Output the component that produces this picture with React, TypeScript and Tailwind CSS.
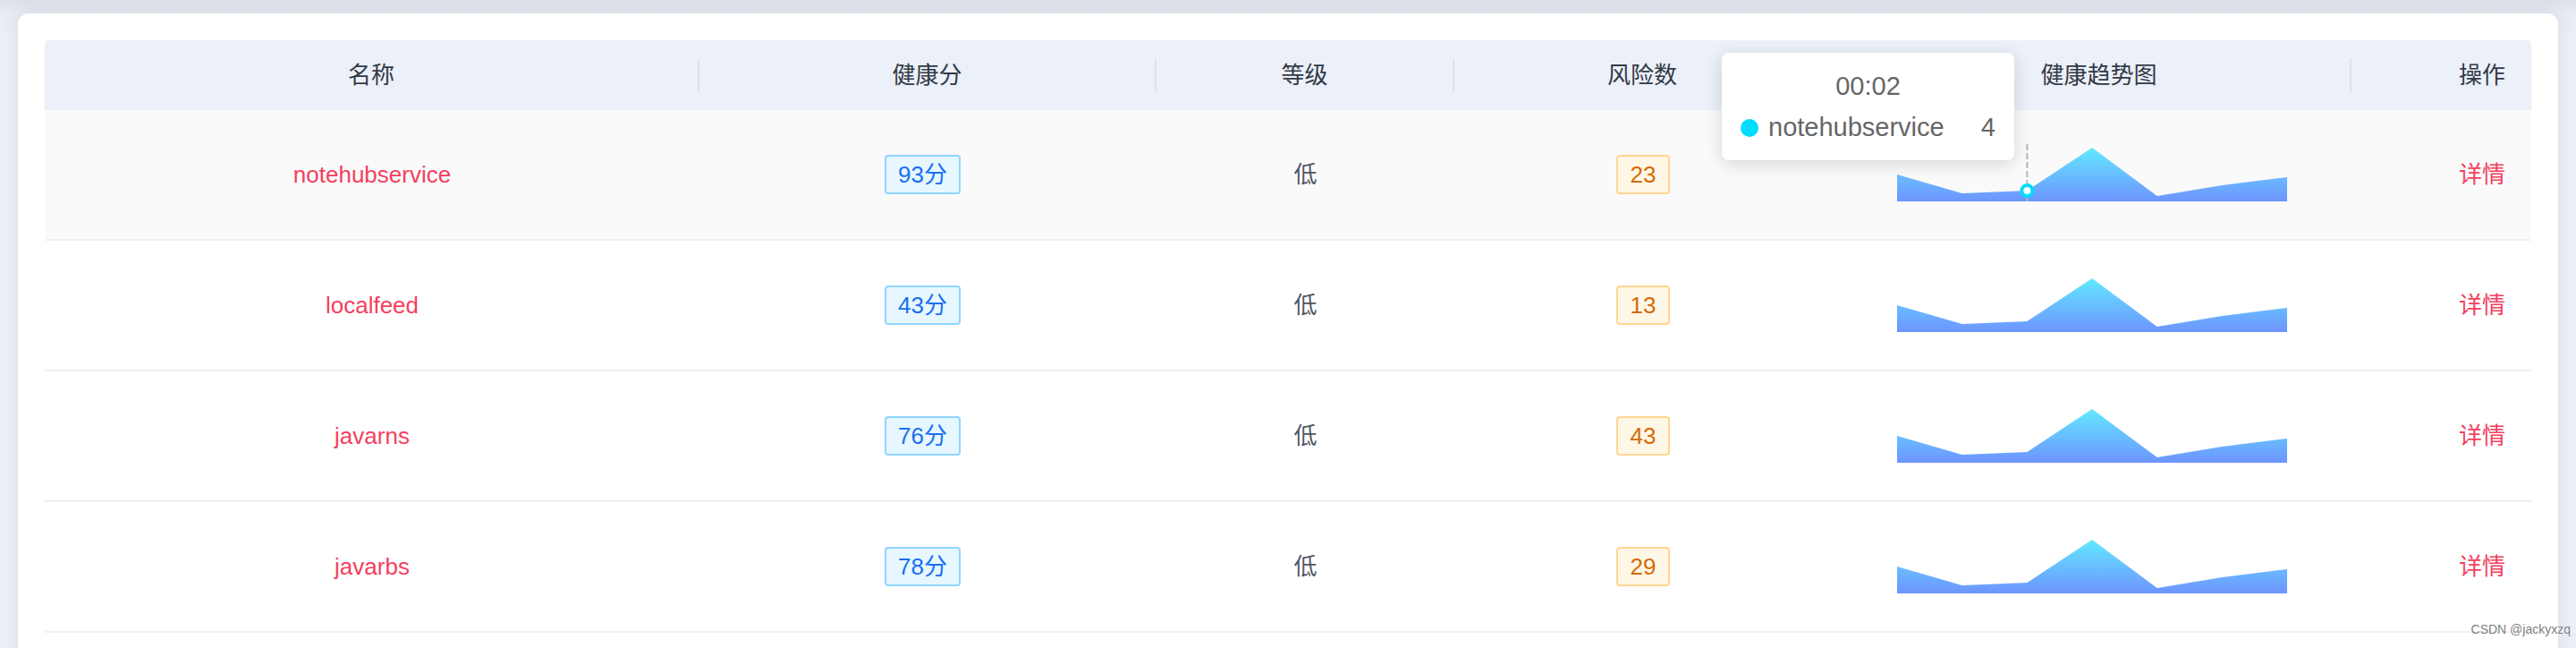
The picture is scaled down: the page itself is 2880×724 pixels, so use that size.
import React from "react";

interface ServiceRow {
  name: string;
  score: number;
  level: string;
  risks: number;
}

const rows: ServiceRow[] = [
  { name: "notehubservice", score: 93, level: "低", risks: 23 },
  { name: "localfeed", score: 43, level: "低", risks: 13 },
  { name: "javarns", score: 76, level: "低", risks: 43 },
  { name: "javarbs", score: 78, level: "低", risks: 29 },
];

// trend values, all rows share the same shape in the screenshot
const trend = [30, 9, 12, 60, 6, 18, 27];

const CHART_W = 436;
const CHART_H = 60;

const TrendChart = ({ id, active }: { id: number; active?: boolean }) => {
  const step = CHART_W / (trend.length - 1);
  const pts = trend.map((v, i) => [i * step, CHART_H - v] as const);
  const area =
    `M0,${CHART_H} ` +
    pts.map(([x, y]) => `L${x.toFixed(1)},${y}`).join(" ") +
    ` L${CHART_W},${CHART_H} Z`;
  const hx = pts[2][0];
  const hy = pts[2][1];

  return (
    <svg width={CHART_W} height={CHART_H} viewBox={`0 0 ${CHART_W} ${CHART_H}`} className="overflow-visible">
      <defs>
        <linearGradient id={`trend-${id}`} x1="0" y1="0" x2="0" y2="1">
          <stop offset="0%" stopColor="#62e9ff" />
          <stop offset="100%" stopColor="#6e94ff" />
        </linearGradient>
      </defs>
      <path d={area} fill={`url(#trend-${id})`} />
      {active && (
        <>
          <line x1={hx} y1={-4} x2={hx} y2={CHART_H} stroke="#b4b7c2" strokeWidth={2} strokeDasharray="7 3" />
          <circle cx={hx} cy={hy} r={6} fill="#ffffff" stroke="#00dcff" strokeWidth={4} />
        </>
      )}
    </svg>
  );
};

const columns = "grid grid-cols-[732px_511px_333px_422px_581px_202px]";

const HeaderCell = ({ label, sep = true, right = false, shift = false }: { label: string; sep?: boolean; right?: boolean; shift?: boolean }) => (
  <div className="flex items-center h-full">
    <span className={right ? "flex-1 text-right pr-[30px]" : shift ? "flex-1 text-center pl-[18px]" : "flex-1 text-center"}>{label}</span>
    {sep && <div className="w-[2px] h-[38px] bg-[#dde1e9]" />}
  </div>
);

const App = () => {
  return (
    <div className="relative w-full h-[724px] overflow-hidden bg-[linear-gradient(to_bottom,#dce1e9_0px,#e7ebf2_14px,#edf1f7_40px)] pt-[15px] px-[20px] font-['Liberation_Sans','Noto_Sans_CJK_SC',sans-serif]">
      <div className="bg-white rounded-[12px] p-[30px] h-[800px] shadow-[0_0_22px_rgba(40,55,90,0.12)]">
        <div className="relative">
          {/* header */}
          <div className={`${columns} h-[78px] bg-[#ecf0f8] rounded-t-[4px] text-[26px] text-[#323a47]`}>
            <HeaderCell label="名称" />
            <HeaderCell label="健康分" />
            <HeaderCell label="等级" />
            <HeaderCell label="风险数" />
            <HeaderCell label="健康趋势图" shift />
            <HeaderCell label="操作" sep={false} right />
          </div>

          {/* body */}
          {rows.map((row, i) => (
            <div
              key={row.name}
              className={`${columns} h-[146px] border-b-2 border-[#f0f0f0] text-[26px] ${i === 0 ? "bg-[#fafafa]" : "bg-white"}`}
            >
              <div className="flex items-center justify-center text-[#f4405e]">{row.name}</div>
              <div className="flex items-center justify-center pr-[12px]">
                <span className="h-[44px] leading-[40px] px-[13px] rounded-[4px] border-2 border-[#91d5ff] bg-[#e6f7ff] text-[#1a6ff0]">
                  {row.score}分
                </span>
              </div>
              <div className="flex items-center justify-center text-[#4f5662]">{row.level}</div>
              <div className="flex items-center justify-center">
                <span className="h-[44px] leading-[40px] px-[14px] rounded-[4px] border-2 border-[#ffd591] bg-[#fff7e6] text-[#d46b08]">
                  {row.risks}
                </span>
              </div>
              <div className="flex items-center justify-center">
                <TrendChart id={i} active={i === 0} />
              </div>
              <div className="flex items-center justify-end pr-[30px] text-[#f4405e]">详情</div>
            </div>
          ))}

          {/* chart tooltip */}
          <div className="absolute left-[1875px] top-[14px] w-[327px] h-[120px] bg-white rounded-[8px] shadow-[0_4px_20px_rgba(0,0,0,0.15)] px-[21px] pt-[19px] flex flex-col gap-[11px] text-[#666666] text-[29px]">
            <div className="h-[36px] leading-[36px] text-center">00:02</div>
            <div className="h-[36px] flex items-center justify-between">
              <div className="flex items-center gap-[11px]">
                <span className="w-[20px] h-[20px] rounded-full bg-[#00ddff]" />
                <span>notehubservice</span>
              </div>
              <span>4</span>
            </div>
          </div>
        </div>
      </div>

      <div className="absolute right-[6px] bottom-[10px] text-[14px] text-[#808080] [text-shadow:0_0_2px_#ffffff]">
        CSDN @jackyxzq
      </div>
    </div>
  );
};

export default App;
